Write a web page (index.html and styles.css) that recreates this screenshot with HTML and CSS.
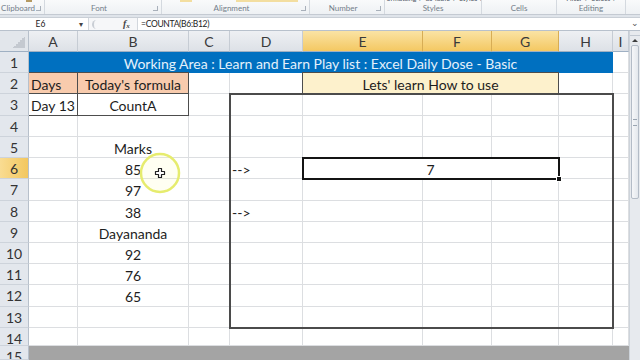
FILE: index.html
```html
<!DOCTYPE html>
<html lang="en">
<head>
    <meta charset="UTF-8">
    <meta name="viewport" content="width=device-width, initial-scale=1.0">
    <title>Excel Daily Dose - CountA</title>
    <link rel="stylesheet" href="styles.css">
</head>
<body>
    <div class="app">
        <div class="ribbon">
            <div class="group g-clip"><span class="peek"><b class="brush"></b></span><div class="foot"><span class="label">Clipboard</span><i class="launcher"></i></div></div>
            <div class="group g-font"><span class="peek"></span><div class="foot"><span class="label">Font</span><i class="launcher"></i></div></div>
            <div class="group g-align"><span class="peek"><b class="hl hl-a"></b><b class="hl hl-b"></b></span><div class="foot"><span class="label">Alignment</span><i class="launcher"></i></div></div>
            <div class="group g-num"><span class="peek"></span><div class="foot"><span class="label">Number</span><i class="launcher"></i></div></div>
            <div class="group g-styles"><span class="peek"><span class="peek-text">Formatting ▾ &nbsp;as Table ▾ &nbsp;Styles ▾</span></span><div class="foot"><span class="label">Styles</span></div></div>
            <div class="group g-cells"><span class="peek"></span><div class="foot"><span class="label">Cells</span></div></div>
            <div class="group g-edit"><span class="peek"><span class="peek-text">Filter ▾ &nbsp;Select ▾</span></span><div class="foot"><span class="label">Editing</span></div></div>
            <div class="group g-rest"></div>
        </div>

        <div class="formula-bar">
            <div class="name-box"><span class="ref">E6</span><span class="drop">▾</span></div>
            <div class="grip"><span class="knob"></span></div>
            <div class="fx">f<sub>x</sub></div>
            <div class="formula">=COUNTA(B6:B12)</div>
            <div class="expand">⌄</div>
        </div>

        <div class="workbook">
            <div class="sheet">
                <div class="cells">
                    <div class="corner"></div>
                    <div class="ch">A</div><div class="ch">B</div><div class="ch">C</div><div class="ch">D</div>
                    <div class="ch on">E</div><div class="ch on">F</div><div class="ch on">G</div>
                    <div class="ch">H</div><div class="ch">I</div>

                    <div class="rh">1</div>
                    <div class="c banner">Working Area : Learn and Earn Play list : Excel Daily Dose - Basic</div>
                    <div class="c"></div>

                    <div class="rh">2</div>
                    <div class="c framed peach">Days</div>
                    <div class="c framed peach mid">Today's formula</div>
                    <div class="c"></div><div class="c"></div>
                    <div class="c framed title mid span3">Lets' learn How to use</div>
                    <div class="c"></div><div class="c"></div>

                    <div class="rh">3</div>
                    <div class="c framed">Day 13</div>
                    <div class="c framed mid">CountA</div>
                    <div class="c"></div><div class="c"></div><div class="c"></div><div class="c"></div><div class="c"></div><div class="c"></div><div class="c"></div>

                    <div class="rh">4</div>
                    <div class="c"></div><div class="c"></div><div class="c"></div><div class="c"></div><div class="c"></div><div class="c"></div><div class="c"></div><div class="c"></div><div class="c"></div>

                    <div class="rh">5</div>
                    <div class="c"></div><div class="c mid">Marks</div><div class="c"></div><div class="c"></div><div class="c"></div><div class="c"></div><div class="c"></div><div class="c"></div><div class="c"></div>

                    <div class="rh on">6</div>
                    <div class="c"></div><div class="c mid">85</div><div class="c"></div><div class="c">--&gt;</div>
                    <div class="c mid span3">7</div>
                    <div class="c"></div><div class="c"></div>

                    <div class="rh">7</div>
                    <div class="c"></div><div class="c mid">97</div><div class="c"></div><div class="c"></div><div class="c"></div><div class="c"></div><div class="c"></div><div class="c"></div><div class="c"></div>

                    <div class="rh">8</div>
                    <div class="c"></div><div class="c mid">38</div><div class="c"></div><div class="c">--&gt;</div><div class="c"></div><div class="c"></div><div class="c"></div><div class="c"></div><div class="c"></div>

                    <div class="rh">9</div>
                    <div class="c"></div><div class="c mid">Dayananda</div><div class="c"></div><div class="c"></div><div class="c"></div><div class="c"></div><div class="c"></div><div class="c"></div><div class="c"></div>

                    <div class="rh">10</div>
                    <div class="c"></div><div class="c mid">92</div><div class="c"></div><div class="c"></div><div class="c"></div><div class="c"></div><div class="c"></div><div class="c"></div><div class="c"></div>

                    <div class="rh">11</div>
                    <div class="c"></div><div class="c mid">76</div><div class="c"></div><div class="c"></div><div class="c"></div><div class="c"></div><div class="c"></div><div class="c"></div><div class="c"></div>

                    <div class="rh">12</div>
                    <div class="c"></div><div class="c mid">65</div><div class="c"></div><div class="c"></div><div class="c"></div><div class="c"></div><div class="c"></div><div class="c"></div><div class="c"></div>

                    <div class="rh">13</div>
                    <div class="c"></div><div class="c"></div><div class="c"></div><div class="c"></div><div class="c"></div><div class="c"></div><div class="c"></div><div class="c"></div><div class="c"></div>

                    <div class="rh">14</div>
                    <div class="c"></div><div class="c"></div><div class="c"></div><div class="c"></div><div class="c"></div><div class="c"></div><div class="c"></div><div class="c"></div><div class="c"></div>

                    <div class="rh">15</div>
                    <div class="shade"></div>
                </div>

                <!-- borders drawn over the cell grid -->
                <div class="marks">
                    <div class="box"></div>
                    <div class="sel"><i class="handle"></i></div>
                </div>

                <svg class="pointer" width="44" height="44" viewBox="0 0 44 44">
                    <circle cx="22" cy="22" r="19" fill="rgba(255,255,170,0.15)" stroke="#e6ec6e" stroke-width="2.5"/>
                    <path d="M20.5 17.5h3v3h3v3h-3v3h-3v-3h-3v-3h3z" fill="#fff" stroke="#222" stroke-width="1.2" stroke-linejoin="round"/>
                </svg>
            </div>

            <div class="vscroll">
                <div class="split"></div>
                <div class="up"></div>
                <div class="thumb"><span class="ridge"></span></div>
            </div>
        </div>
    </div>
</body>
</html>
```

FILE: styles.css
```css
body {
    margin: 0;
    background-color: #fff;
    font-family: Lato, 'Open Sans', sans-serif;
}

.app {
    width: 640px;
    height: 360px;
    overflow: hidden;
    display: flex;
    flex-direction: column;
    background-color: #dfe4ea;
}

/* ribbon (only the group captions are visible) */
.ribbon {
    flex: none;
    height: 15px;
    display: flex;
    overflow: hidden;
    background: linear-gradient(#f9fafb, #eef1f4);
    border-bottom: 1px solid #c4cad2;
    box-sizing: border-box;
}

.group {
    display: flex;
    flex-direction: column;
    justify-content: space-between;
    border-right: 1px solid #d4d9df;
    box-sizing: border-box;
}

.g-clip { width: 45px; }
.g-font { width: 117px; }
.g-align { width: 148px; }
.g-num { width: 75px; }
.g-styles { width: 97px; }
.g-cells { width: 75px; }
.g-edit { width: 69px; }
.g-rest { flex: 1; border-right: none; }

.peek {
    display: flex;
    justify-content: center;
    gap: 4px;
    height: 3px;
    overflow: hidden;
}

.peek-text {
    margin-top: -6px;
    font-size: 7px;
    line-height: 8px;
    color: #4a5360;
    white-space: nowrap;
}

.brush {
    width: 6px;
    height: 2px;
    margin-left: 14px;
    background-color: #b59a62;
}

.hl {
    height: 2px;
    background-color: #f3dea0;
}

.hl-a { width: 12px; margin-left: 6px; }
.hl-b { width: 62px; margin-left: 40px; }

.foot {
    display: flex;
    align-items: center;
    height: 11px;
}

.label {
    flex: 1;
    text-align: center;
    font-size: 8px;
    line-height: 11px;
    color: #737e8a;
    white-space: nowrap;
}

.launcher {
    width: 4px;
    height: 4px;
    margin-right: 3px;
    border: 1px solid #a8b0ba;
    border-width: 0 1px 1px 0;
}

/* formula bar */
.formula-bar {
    flex: none;
    height: 14px;
    margin-top: 2px;
    display: flex;
    background-color: #fff;
    border-top: 1px solid #c9cfd6;
    border-bottom: 1px solid #b8c1cc;
    box-sizing: border-box;
    font-size: 9px;
    color: #222;
}

.name-box {
    width: 88px;
    display: flex;
    align-items: center;
    border-right: 1px solid #d2d7dd;
}

.name-box .ref {
    flex: 1;
    text-align: center;
    padding-left: 2px;
    font-size: 8.5px;
}

.name-box .drop {
    width: 9px;
    font-size: 8px;
    color: #444;
}

.grip {
    width: 34px;
    display: flex;
    align-items: center;
    background-color: #f6f7f9;
}

.knob {
    width: 7px;
    height: 9px;
    margin-left: 3px;
    border-left: 2px solid #c9ced5;
    border-radius: 50%;
}

.fx {
    width: 14px;
    font-family: 'Liberation Serif', serif;
    font-style: italic;
    font-weight: bold;
    font-size: 10px;
    line-height: 12px;
    color: #444;
    background-color: #f6f7f9;
    border-right: 1px solid #d2d7dd;
}

.fx sub {
    font-size: 7px;
    vertical-align: -1px;
}

.formula {
    flex: 1;
    padding-left: 3px;
    line-height: 12px;
    font-size: 8.5px;
    letter-spacing: -0.3px;
}

.expand {
    width: 10px;
    font-size: 9px;
    line-height: 9px;
    color: #555;
    text-align: center;
}

/* worksheet */
.workbook {
    flex: 1;
    display: flex;
    min-height: 0;
}

.sheet {
    position: relative;
    width: 629px;
    display: grid;
    background-color: #fff;
}

.cells,
.marks {
    grid-area: 1 / 1;
    display: grid;
    grid-template-columns: 29px 49px 111px 41px 73px 120px 69px 67px 54px 16px;
    grid-template-rows: 21px repeat(13, 21.23px) 18px 1fr;
    min-height: 0;
}

.corner {
    background: linear-gradient(135deg, transparent 50%, #c4c9d0 50%) right 3px bottom 3px / 12px 12px no-repeat, #e2e6eb;
    border-right: 1px solid #b7c0cb;
    border-bottom: 1px solid #9fb0c3;
}

.ch {
    text-align: center;
    font-size: 14px;
    line-height: 21px;
    color: #3a3a3a;
    background: linear-gradient(#eef0f3, #dde1e7);
    border-right: 1px solid #c6ccd4;
    border-bottom: 1px solid #9fb0c3;
    box-sizing: border-box;
}

.ch.on {
    background: linear-gradient(#fae3a4, #f4c862);
    border-right-color: #d7ad55;
}

.rh {
    text-align: center;
    font-size: 14px;
    line-height: 21px;
    color: #333;
    background-color: #e3e7ed;
    border-right: 1px solid #b7c0cb;
    border-bottom: 1px solid #cdd3db;
    box-sizing: border-box;
    overflow: hidden;
}

.rh.on {
    background: linear-gradient(90deg, #f9dc92, #f3c75f);
}

.c {
    padding: 1px 2px 0;
    font-size: 14px;
    line-height: 21px;
    color: #1d1d1d;
    white-space: nowrap;
    overflow: hidden;
    border-right: 1px solid #dcdee1;
    border-bottom: 1px solid #dcdee1;
    box-sizing: border-box;
}

.c:empty {
    padding: 0;
}

.mid {
    text-align: center;
}

.span3 {
    grid-column: span 3;
}

.banner {
    grid-column: span 8;
    text-align: center;
    color: #e4f1fb;
    background-color: #0070c0;
    border-color: #0070c0;
    overflow: visible;
}

.framed {
    margin-top: -1px;
    border-top: 1px solid #4d4d4d;
    border-right-color: #4d4d4d;
    border-bottom-color: #4d4d4d;
}

.peach {
    background-color: #f8cbad;
}

.title {
    margin-left: -1px;
    border-left: 1px solid #4d4d4d;
    background-color: #fdf1cc;
}

.shade {
    grid-column: span 9;
    background-color: #a4a4a4;
}

.marks {
    pointer-events: none;
}

.box {
    grid-row: 4 / 15;
    grid-column: 5 / 10;
    margin: -1px;
    border: 2px solid #4b4b4b;
}

.sel {
    position: relative;
    grid-row: 7;
    grid-column: 6 / 9;
    margin: -1px;
    border: 2px solid #141414;
}

.handle {
    position: absolute;
    right: -4px;
    bottom: -4px;
    width: 4px;
    height: 4px;
    background-color: #141414;
    border: 1px solid #fff;
}

.pointer {
    position: absolute;
    left: 138px;
    top: 120px;
}

/* vertical scroll bar */
.vscroll {
    width: 11px;
    display: flex;
    flex-direction: column;
    background-color: #e7eaee;
    border-left: 1px solid #cdd3da;
    box-sizing: border-box;
}

.vscroll .split {
    height: 4px;
    border-bottom: 1px solid #c2c9d2;
}

.vscroll .up {
    height: 9px;
    display: flex;
    justify-content: center;
    align-items: center;
}

.vscroll .up::before {
    content: "";
    border-left: 3px solid transparent;
    border-right: 3px solid transparent;
    border-bottom: 3px solid #3d3d3d;
}

.vscroll .thumb {
    height: 152px;
    margin: 0 1px;
    display: flex;
    justify-content: center;
    align-items: center;
    background: linear-gradient(90deg, #f6f7f9, #e4e8ed);
    border: 1px solid #b4bcc7;
    border-radius: 2px;
}

.ridge {
    width: 4px;
    height: 5px;
    border-top: 1px solid #9aa5b2;
    border-bottom: 1px solid #9aa5b2;
}
```
